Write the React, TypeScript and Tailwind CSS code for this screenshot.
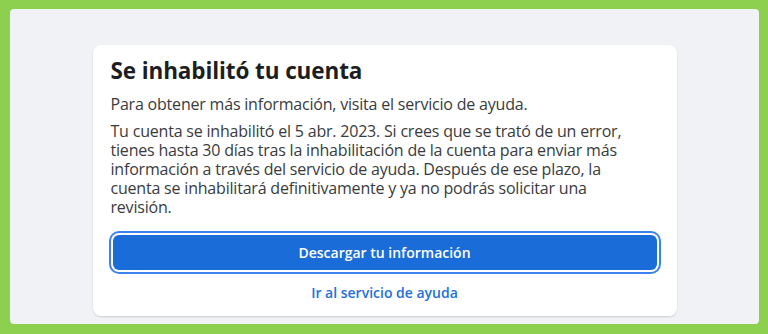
import React from 'react';

const App: React.FC = () => {
  return (
    <div className="w-[768px] h-[334px] bg-[#8dcf4f] pl-[10px] pt-[9px] pr-[9px] pb-[10px]" style={{ fontFamily: '"Open Sans", "Noto Sans", sans-serif' }}>
      <div className="h-full rounded-[4px] bg-[#f0f2f5] pt-[36px] flex justify-center">
        {/* Card */}
        <div className="w-[584px] h-[271px] bg-white rounded-[8px] shadow-[0_1px_2px_rgba(0,0,0,0.15)] px-[18px] pt-[12px]">
          <h1 className="text-[22.5px] leading-[28px] font-bold text-[#1c1e21] tracking-[-0.1px]">Se inhabilitó tu cuenta</h1>
          <p className="mt-[10px] text-[16px] leading-[19px] text-[#3a3b3c] tracking-[-0.2px]">
            Para obtener más información, visita el servicio de ayuda.
          </p>
          <p className="mt-[8px] text-[16px] leading-[19px] text-[#3a3b3c] tracking-[-0.2px] w-[540px]">
            Tu cuenta se inhabilitó el 5 abr. 2023. Si crees que se trató de un error, tienes hasta 30 días tras la
            inhabilitación de la cuenta para enviar más información a través del servicio de ayuda. Después de ese
            plazo, la cuenta se inhabilitará definitivamente y ya no podrás solicitar una revisión.
          </p>
          <div className="mt-[18px] px-[2px]">
            <button className="w-full h-[35px] rounded-[6px] bg-[#1a6cd9] text-white text-[14px] font-semibold ring-2 ring-[#3b82f0] ring-offset-2 ring-offset-white">
              Descargar tu información
            </button>
          </div>
          <div className="mt-[10px] text-center">
            <a className="text-[14px] font-semibold text-[#2370dc]">Ir al servicio de ayuda</a>
          </div>
        </div>
      </div>
    </div>
  );
};

export default App;
